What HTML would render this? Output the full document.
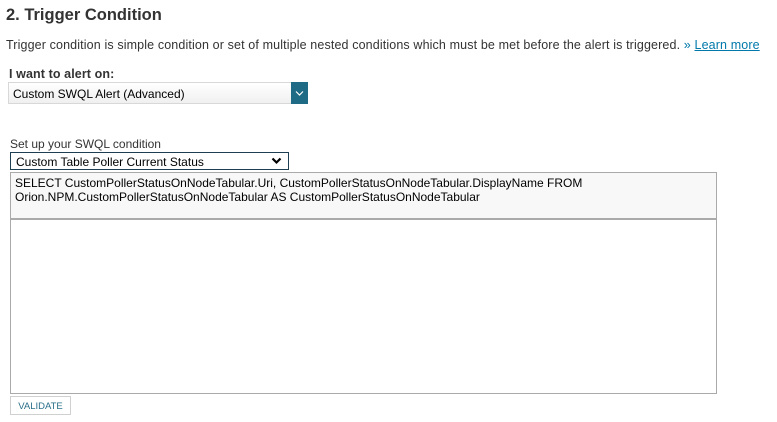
<!DOCTYPE html>
<html><head><meta charset="utf-8"><style>
*{box-sizing:border-box;margin:0;padding:0}
body{width:777px;height:422px;background:#fff;position:relative;overflow:hidden;font-family:"Liberation Sans",sans-serif;color:#333}
.abs{position:absolute;white-space:nowrap}
h2{position:absolute;left:6px;top:6px;font-size:16.5px;font-weight:bold;color:#333}
.desc{left:6px;top:38px;font-size:12.5px;color:#333;letter-spacing:0.13px}
.desc a{color:#0079aa;text-decoration:underline}
.desc .r{color:#0079aa}
.lbl{left:9px;top:67px;font-size:12.5px;font-weight:bold;letter-spacing:0.1px}
.sel1{left:8px;top:82px;width:300px;height:22px;border:1px solid #d8d8d8;background:linear-gradient(#fff,#f0f0f0);font-size:12px;color:#000;padding:4px 0 0 4px}
.btn1{left:291px;top:82px;width:17px;height:22px;background:#1f6a84}
.lbl2{left:10px;top:137px;font-size:12px;color:#333}
.sel2{left:10px;top:152px;width:279px;height:18px;border:1px solid #1e3f52;background:#fff;font-size:12px;color:#000;padding:2px 0 0 5px}
.box1{left:10px;top:172px;width:707px;height:48px;border:1px solid #aaa;border-bottom:2px solid #aaa;background:#f8f8f8;font-size:12px;color:#000;padding:3px 4px;line-height:14px;white-space:normal}
.box2{left:10px;top:220px;width:707px;height:174px;border:1px solid #aaa;border-top:none;background:#fff}
.val{left:10px;top:396px;width:61px;height:19px;border:1px solid #d0d0d0;font-size:9.5px;color:#2a6f8a;text-align:center;padding-top:4px}
</style></head><body>
<h2>2. Trigger Condition</h2>
<div class="abs desc">Trigger condition is simple condition or set of multiple nested conditions which must be met before the alert is triggered. <span class="r">»</span> <a>Learn more</a></div>
<div class="abs lbl">I want to alert on:</div>
<div class="abs sel1">Custom SWQL Alert (Advanced)</div>
<div class="abs btn1"><svg width="17" height="22"><path d="M5 9.5 L8.5 13 L12 9.5" stroke="#fff" stroke-width="1.2" fill="none"/></svg></div>
<div class="abs lbl2">Set up your SWQL condition</div>
<div class="abs sel2">Custom Table Poller Current Status<svg style="position:absolute;right:6px;top:4px" width="11" height="8"><path d="M1.5 1.5 L5.5 5.5 L9.5 1.5" stroke="#000" stroke-width="2.2" fill="none"/></svg></div>
<div class="abs box1">SELECT CustomPollerStatusOnNodeTabular.Uri, CustomPollerStatusOnNodeTabular.DisplayName FROM<br>Orion.NPM.CustomPollerStatusOnNodeTabular AS CustomPollerStatusOnNodeTabular</div>
<div class="abs box2"></div>
<div class="abs val">VALIDATE</div>
</body></html>
